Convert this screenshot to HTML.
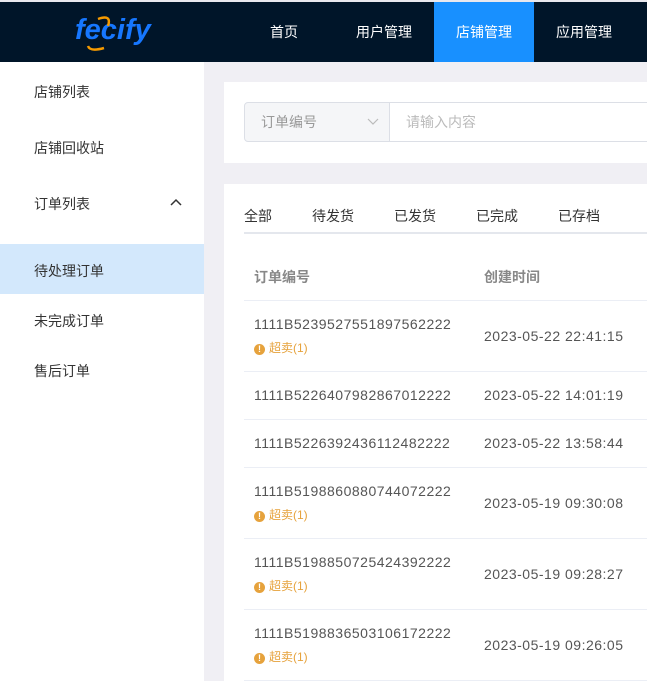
<!DOCTYPE html>
<html><head><meta charset="utf-8"><style>
*{margin:0;padding:0;box-sizing:border-box}
body{width:647px;height:681px;overflow:hidden;background:#f0eff4;font-family:"Liberation Sans","Noto Sans CJK SC",sans-serif;font-size:14px;color:#333;position:relative}
.top{position:absolute;left:0;top:0;width:647px;height:3px;background:#e8e8ee}
.hdr{position:absolute;left:0;top:2px;width:647px;height:60px;background:#001529}
.logo{position:absolute;left:75px;top:12px;font:italic bold 29px "Liberation Sans",sans-serif;color:#1677ff;letter-spacing:0px}
.nav{position:absolute;top:0;height:60px;line-height:60px;color:#fff;font-size:14px;text-align:center}
.side{position:absolute;left:0;top:62px;width:204px;height:619px;background:#fff}
.si{position:absolute;left:34px;font-size:14px;color:#333}
.act{position:absolute;left:0;top:182px;width:204px;height:50px;background:#d3e8fc}
.card{position:absolute;left:224px;background:#fff;width:423px}
.sel{position:absolute;left:20px;top:20px;width:146px;height:40px;background:#f5f6f8;border:1px solid #dcdfe6;border-radius:4px 0 0 4px;color:#999;line-height:38px;padding-left:16px}
.inp{position:absolute;left:166px;top:20px;width:260px;height:40px;border:1px solid #dcdfe6;border-left:none;color:#bbb;line-height:38px;padding-left:16px}
.tab{position:absolute;top:22px;font-size:14px;color:#333}
.row{position:absolute;left:20px;width:403px;border-bottom:1px solid #ebeef5}
.c1{position:absolute;left:10px;color:#555;letter-spacing:0.5px}
.c2{position:absolute;left:240px;color:#555;letter-spacing:0.5px}
.w{position:absolute;left:10px;color:#e6a23c;font-size:12px}
.w i{display:inline-block;width:11px;height:11px;border-radius:50%;background:#e6a23c;color:#fff;font-style:normal;font-size:9px;line-height:11px;text-align:center;font-weight:bold;margin-right:4px;vertical-align:0px}
</style></head><body>
<div class="top"></div>
<div class="hdr">
<div class="logo">fecify</div>
<svg style="position:absolute;left:82px;top:14px" width="40" height="36"><path d="M16 3 Q30 -2 26 10" stroke="#f59a00" stroke-width="2.5" fill="none"/><path d="M6 30 Q8 36 22 32" stroke="#f59a00" stroke-width="2.5" fill="none"/></svg>
<div class="nav" style="left:254px;width:60px">首页</div>
<div class="nav" style="left:340px;width:88px">用户管理</div>
<div class="nav" style="left:434px;width:100px;background:#1890ff">店铺管理</div>
<div class="nav" style="left:540px;width:88px">应用管理</div>
</div>
<div class="side">
<div class="act"></div>
<div class="si" style="top:20px">店铺列表</div>
<div class="si" style="top:76px">店铺回收站</div>
<div class="si" style="top:132px">订单列表</div>
<svg style="position:absolute;left:169px;top:136px" width="14" height="10"><path d="M2 7 L7 2 L12 7" stroke="#333" stroke-width="1.5" fill="none"/></svg>
<div class="si" style="top:199px">待处理订单</div>
<div class="si" style="top:249px">未完成订单</div>
<div class="si" style="top:299px">售后订单</div>
</div>
<div class="card" style="top:82px;height:81px">
<div class="sel">订单编号<svg style="position:absolute;left:122px;top:15px" width="12" height="8"><path d="M1 1 L6 6 L11 1" stroke="#bbb" stroke-width="1.2" fill="none"/></svg></div>
<div class="inp">请输入内容</div>
</div>
<div class="card" style="top:184px;height:497px">
<div class="tab" style="left:20px">全部</div>
<div class="tab" style="left:88px">待发货</div>
<div class="tab" style="left:170px">已发货</div>
<div class="tab" style="left:252px">已完成</div>
<div class="tab" style="left:334px">已存档</div>
<div style="position:absolute;left:20px;top:48px;width:403px;height:2px;background:#e4e7ed"></div>
<div class="row" style="top:66px;height:51px"><div class="c1" style="top:17px;color:#888;font-weight:bold;letter-spacing:0">订单编号</div><div class="c2" style="top:17px;color:#888;font-weight:bold;letter-spacing:0">创建时间</div></div>
<div class="row" style="top:117px;height:71px"><div class="c1" style="top:15px">1111B5239527551897562222</div><div class="w" style="top:38px"><i>!</i>超卖(1)</div><div class="c2" style="top:27px">2023-05-22 22:41:15</div></div>
<div class="row" style="top:188px;height:48px"><div class="c1" style="top:15px">1111B5226407982867012222</div><div class="c2" style="top:15px">2023-05-22 14:01:19</div></div>
<div class="row" style="top:236px;height:48px"><div class="c1" style="top:15px">1111B5226392436112482222</div><div class="c2" style="top:15px">2023-05-22 13:58:44</div></div>
<div class="row" style="top:284px;height:71px"><div class="c1" style="top:15px">1111B5198860880744072222</div><div class="w" style="top:38px"><i>!</i>超卖(1)</div><div class="c2" style="top:27px">2023-05-19 09:30:08</div></div>
<div class="row" style="top:355px;height:71px"><div class="c1" style="top:15px">1111B5198850725424392222</div><div class="w" style="top:38px"><i>!</i>超卖(1)</div><div class="c2" style="top:27px">2023-05-19 09:28:27</div></div>
<div class="row" style="top:426px;height:71px"><div class="c1" style="top:15px">1111B5198836503106172222</div><div class="w" style="top:38px"><i>!</i>超卖(1)</div><div class="c2" style="top:27px">2023-05-19 09:26:05</div></div>
</div>
</body></html>
